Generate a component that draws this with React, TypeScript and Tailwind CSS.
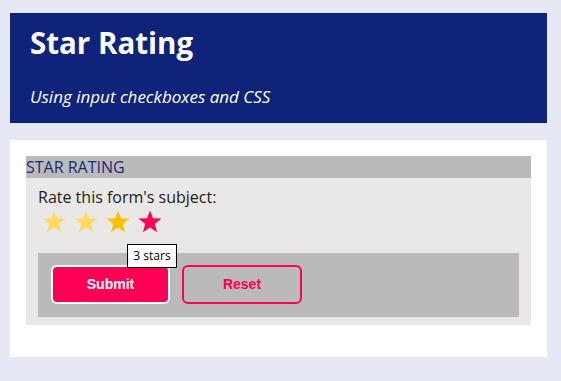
import React from 'react';

const Star = ({ color }: { color: string }) => (
  <svg width="24" height="23" viewBox="0 0 24 23" className="block">
    <polygon
      points="12,0.5 15,8.2 23.5,8.6 16.8,13.9 19.1,22.3 12,17.5 4.9,22.3 7.2,13.9 0.5,8.6 9,8.2"
      fill={color}
    />
  </svg>
);

const App: React.FC = () => {
  const stars = ['#ffd866', '#ffd866', '#ffc000', '#ff0055'];

  return (
    <div className="min-h-screen bg-[#e6e8f5] pl-[10px] pr-[14px] pt-[13px] font-['Open_Sans',sans-serif]">
      {/* Page header */}
      <header className="h-[110px] bg-[#10237a] px-5 text-white">
        <h1 className="pt-[10px] text-[29.5px] font-bold leading-[40px]">Star Rating</h1>
        <p className="mt-[22px] text-[17px] italic leading-6">Using input checkboxes and CSS</p>
      </header>

      {/* Card */}
      <div className="mt-[17px] h-[217px] bg-white px-4 pt-4">
        <div className="bg-[#e9e8e6]">
          <div className="h-[22px] bg-[#bababa] text-[16px] leading-[22px] text-[#1a2a7a]">STAR RATING</div>
          <div className="px-3 pt-[8px] pb-[8px]">
            <div className="text-[16px] leading-[22px] text-[#1c1c1c]">Rate this form's subject:</div>
            <div className="relative mt-[2px] flex gap-[8px] pl-[4px]">
              {stars.map((c, i) => (
                <Star key={i} color={c} />
              ))}
              <div className="absolute left-[89px] top-[34px] z-10 h-6 w-[50px] border border-black bg-white text-center text-[12px] leading-[22px] text-black">
                3 stars
              </div>
            </div>
            <div className="mt-[20px] flex h-16 gap-3 bg-[#bababa] pl-[13px] pt-3">
              <button className="h-[39px] w-[119px] rounded-md border-2 border-white bg-[#ff0055] font-['Liberation_Sans',Arial,sans-serif] text-[14px] font-bold text-white">
                Submit
              </button>
              <button className="h-[39px] w-[120px] rounded-md border-2 border-[#ff0055] font-['Liberation_Sans',Arial,sans-serif] text-[14px] font-bold text-[#ff0055]">
                Reset
              </button>
            </div>
          </div>
        </div>
      </div>
    </div>
  );
};

export default App;
